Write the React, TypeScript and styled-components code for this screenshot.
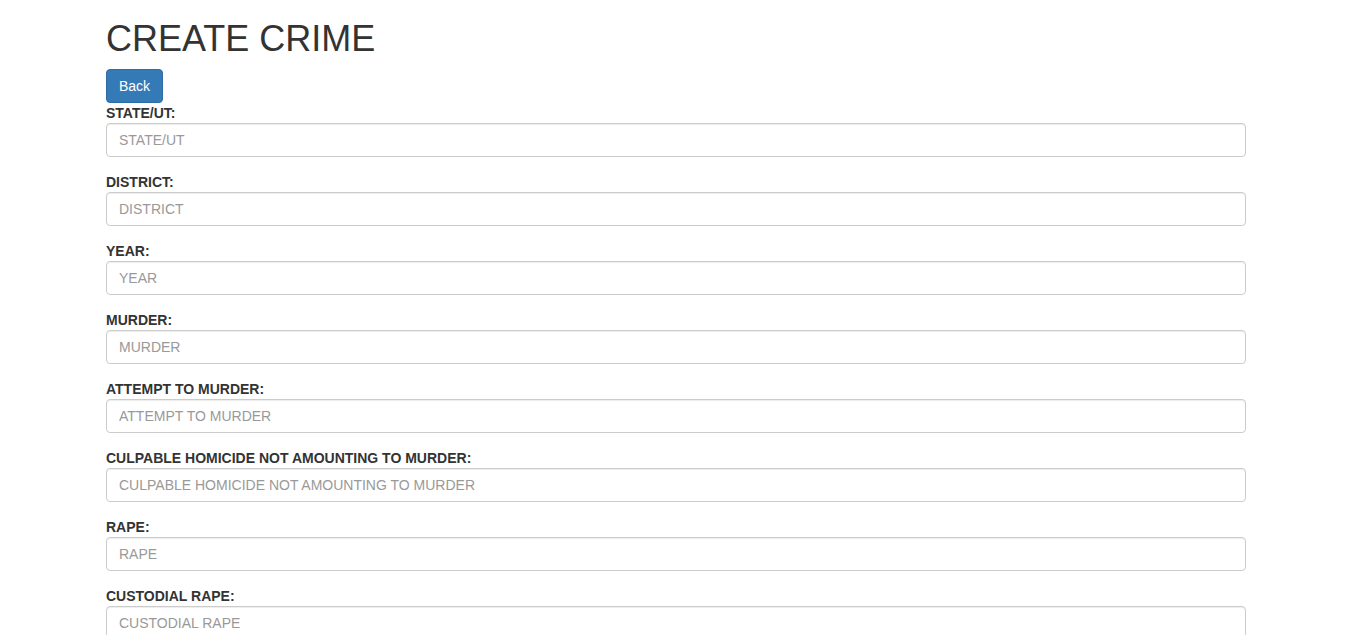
import React from "react";
import styled, { createGlobalStyle } from "styled-components";

const GlobalStyle = createGlobalStyle`
  * { box-sizing: border-box; }
  html { overflow: hidden; }
  body {
    margin: 0;
    padding-right: 1px;
    font-family: "Liberation Sans", Arial, Helvetica, sans-serif;
    font-size: 14px;
    line-height: 1.42857143;
    color: #333;
    background: #fff;
  }
`;

const Container = styled.div`
  width: 1170px;
  margin: 0 auto;
  padding: 0 15px;
`;

const Title = styled.h1`
  font-size: 36px;
  font-weight: 500;
  line-height: 1.1;
  margin: 19px 0 10px;
  color: #333;
`;

const Button = styled.button`
  display: inline-block;
  padding: 6px 12px;
  font-family: inherit;
  font-size: 14px;
  line-height: 1.42857143;
  color: #fff;
  background-color: #337ab7;
  border: 1px solid #2e6da4;
  border-radius: 4px;
  cursor: pointer;
`;

const Form = styled.form`
  display: block;
`;

const Group = styled.div`
  margin-bottom: 15px;
`;

const Label = styled.label`
  display: block;
  font-weight: bold;
  line-height: 20px;
`;

const Input = styled.input`
  display: block;
  width: 100%;
  height: 34px;
  padding: 6px 12px;
  font-family: inherit;
  font-size: 14px;
  line-height: 1.42857143;
  color: #555;
  background: #fff;
  border: 1px solid #ccc;
  border-radius: 4px;
  box-shadow: inset 0 1px 1px rgba(0, 0, 0, 0.075);
  &::placeholder {
    color: #999;
  }
`;

const fields = [
  "STATE/UT",
  "DISTRICT",
  "YEAR",
  "MURDER",
  "ATTEMPT TO MURDER",
  "CULPABLE HOMICIDE NOT AMOUNTING TO MURDER",
  "RAPE",
  "CUSTODIAL RAPE",
  "OTHER RAPE",
  "KIDNAPPING & ABDUCTION",
];

export default function App() {
  return (
    <>
      <GlobalStyle />
      <Container>
        <Title>CREATE CRIME</Title>
        <Button type="button">Back</Button>
        <Form>
          {fields.map((f) => (
            <Group key={f}>
              <Label>{f}:</Label>
              <Input type="text" placeholder={f} />
            </Group>
          ))}
        </Form>
      </Container>
    </>
  );
}
